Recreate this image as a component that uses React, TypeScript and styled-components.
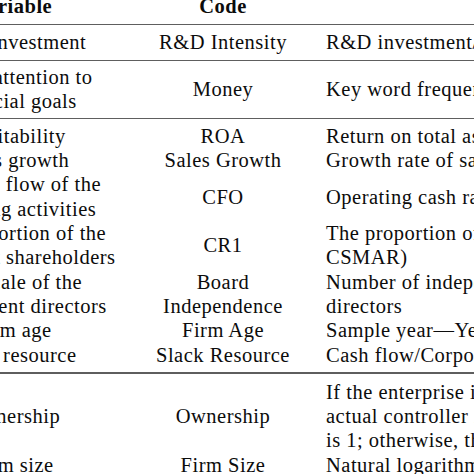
import React from "react";
import styled, { createGlobalStyle } from "styled-components";

const GlobalStyle = createGlobalStyle`
  html, body {
    margin: 0;
    padding: 0;
    background: #ffffff;
    overflow: hidden;
  }
`;

const Viewport = styled.div`
  width: 474px;
  height: 474px;
  overflow: hidden;
  background: #ffffff;
`;

const Table = styled.div`
  width: 1120px;
  margin-left: -122px;
  margin-top: -6px;
  font-family: "Liberation Serif", "Times New Roman", serif;
  font-size: 20.5px;
  letter-spacing: 0.5px;
  line-height: 24.33px;
  color: #0c0c0c;
`;

const Section = styled.div<{ $pt: number; $pb: number; $rule: number }>`
  padding-top: ${(p) => p.$pt}px;
  padding-bottom: ${(p) => p.$pb}px;
  border-bottom: ${(p) => (p.$rule ? `${p.$rule}px solid #5e5e5e` : "none")};
`;

const Row = styled.div<{ $head?: boolean }>`
  display: grid;
  grid-template-columns: 270px 150px 1fr;
  align-items: center;
  font-weight: ${(p) => (p.$head ? 700 : 400)};
`;

const VarCell = styled.div`
  text-align: center;
  white-space: nowrap;
`;

const CodeCell = styled.div`
  text-align: center;
  white-space: nowrap;
`;

const DefCell = styled.div<{ $center?: boolean }>`
  padding-left: ${(p) => (p.$center ? 0 : 28)}px;
  text-align: ${(p) => (p.$center ? "center" : "left")};
  white-space: nowrap;
  width: ${(p) => (p.$center ? "700px" : "auto")};
`;

const Line = styled.span`
  display: block;
`;

type Entry = {
  variable: string[];
  code: string[];
  definition: string[];
};

const ruled: { entries: Entry[]; pt: number; pb: number; rule: number }[] = [
  {
    pt: 5,
    pb: 5,
    rule: 1,
    entries: [
      {
        variable: ["R&D investment"],
        code: ["R&D Intensity"],
        definition: ["R&D investment/Operating income"],
      },
    ],
  },
  {
    pt: 4.5,
    pb: 4.5,
    rule: 1,
    entries: [
      {
        variable: ["Firms' attention to", "financial goals"],
        code: ["Money"],
        definition: ["Key word frequency of financial goals"],
      },
    ],
  },
  {
    pt: 4.5,
    pb: 4.5,
    rule: 2,
    entries: [
      {
        variable: ["Profitability"],
        code: ["ROA"],
        definition: ["Return on total assets"],
      },
      {
        variable: ["Sales growth"],
        code: ["Sales Growth"],
        definition: ["Growth rate of sales revenue"],
      },
      {
        variable: ["Net cash flow of the", "operating activities"],
        code: ["CFO"],
        definition: ["Operating cash ratio"],
      },
      {
        variable: ["The proportion of the", "ten largest shareholders"],
        code: ["CR1"],
        definition: ["The proportion of the largest shareholder (from", "CSMAR)"],
      },
      {
        variable: ["The scale of the", "independent directors"],
        code: ["Board", "Independence"],
        definition: ["Number of independent directors/Total number of", "directors"],
      },
      {
        variable: ["Firm age"],
        code: ["Firm Age"],
        definition: ["Sample year\u2014Year of establishment"],
      },
      {
        variable: ["Slack resource"],
        code: ["Slack Resource"],
        definition: ["Cash flow/Corporate total assets"],
      },
    ],
  },
  {
    pt: 6,
    pb: 4,
    rule: 0,
    entries: [
      {
        variable: ["Ownership"],
        code: ["Ownership"],
        definition: [
          "If the enterprise is state-owned, that is, the",
          "actual controller is the government, the value",
          "is 1; otherwise, the value is 0",
        ],
      },
      {
        variable: ["Firm size"],
        code: ["Firm Size"],
        definition: ["Natural logarithm of total assets"],
      },
    ],
  },
];

const Lines = ({ items }: { items: string[] }) => (
  <>
    {items.map((t, i) => (
      <Line key={i}>{t}</Line>
    ))}
  </>
);

export default function App() {
  return (
    <Viewport>
      <GlobalStyle />
      <Table>
        <Section $pt={0} $pb={6} $rule={1}>
          <Row $head>
            <VarCell>Variable</VarCell>
            <CodeCell>Code</CodeCell>
            <DefCell $center>Variable Definition</DefCell>
          </Row>
        </Section>
        {ruled.map((sec, si) => (
          <Section key={si} $pt={sec.pt} $pb={sec.pb} $rule={sec.rule}>
            {sec.entries.map((e, ei) => (
              <Row key={ei}>
                <VarCell>
                  <Lines items={e.variable} />
                </VarCell>
                <CodeCell>
                  <Lines items={e.code} />
                </CodeCell>
                <DefCell>
                  <Lines items={e.definition} />
                </DefCell>
              </Row>
            ))}
          </Section>
        ))}
      </Table>
    </Viewport>
  );
}
